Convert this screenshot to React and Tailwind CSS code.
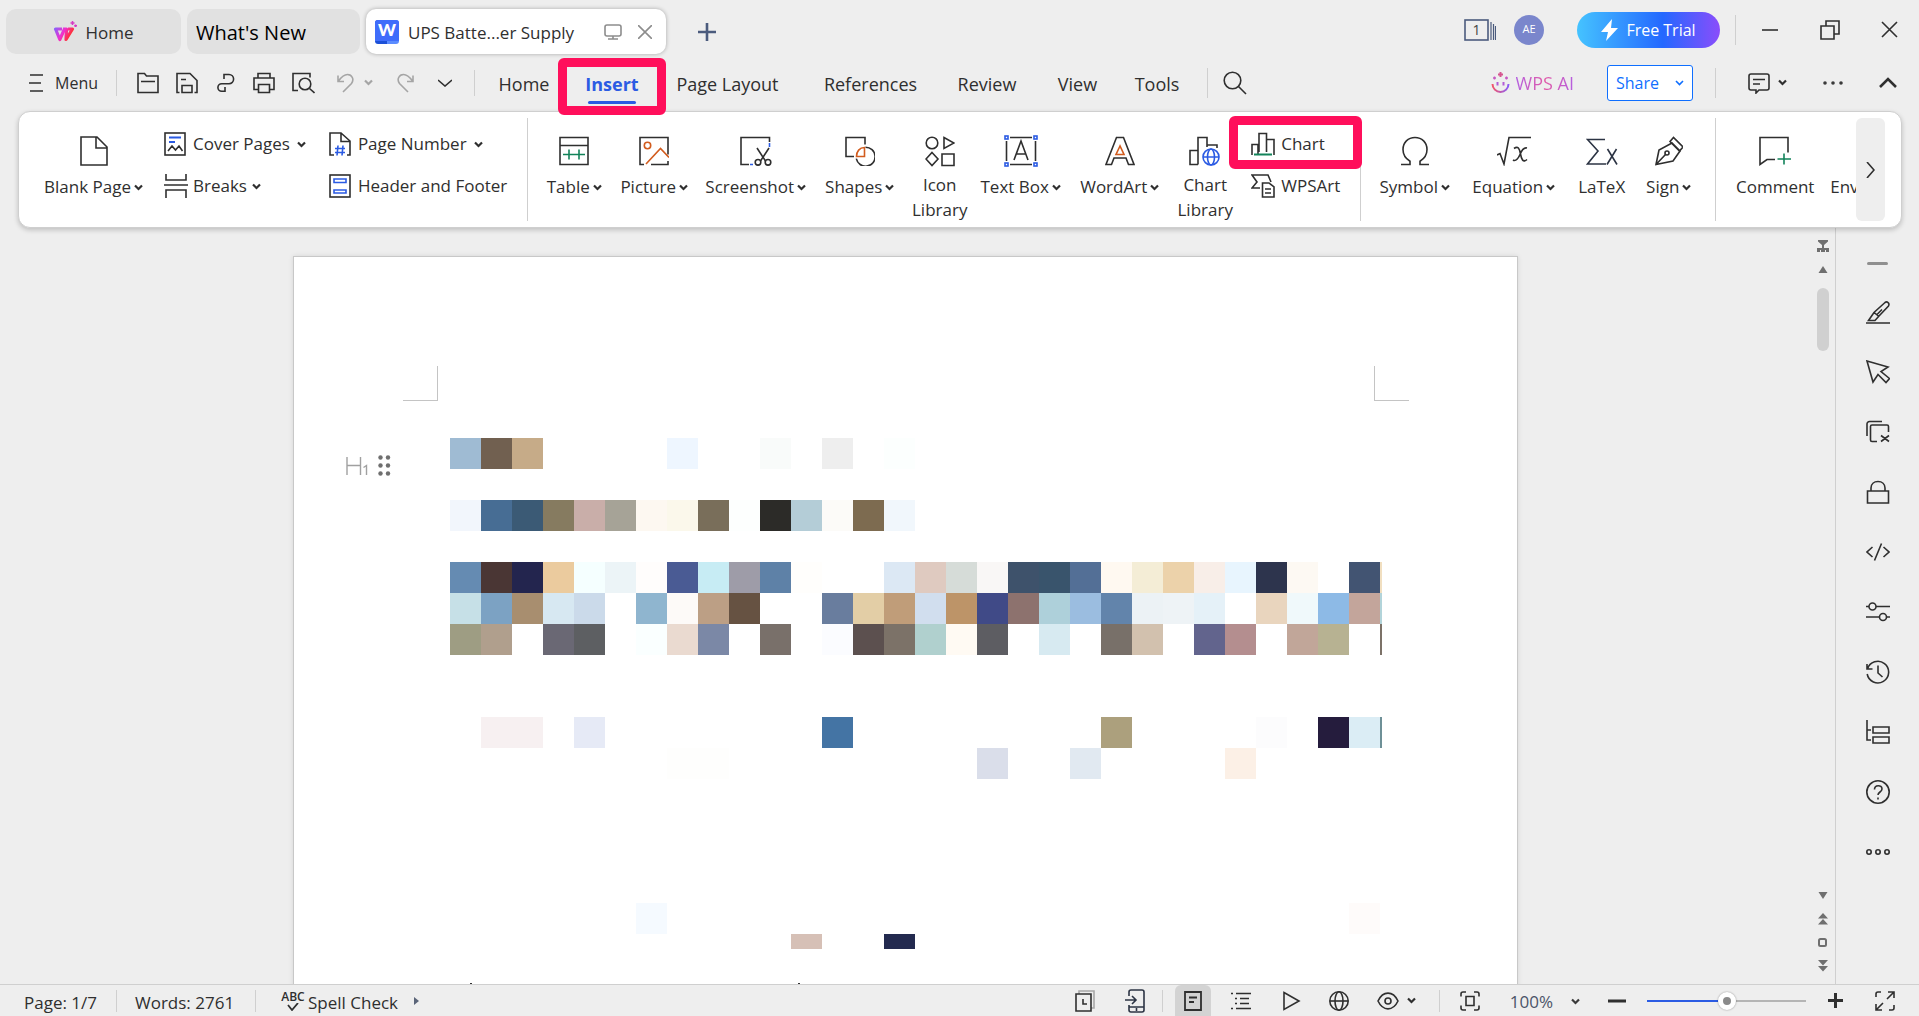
import React, { useState } from "react";
import clsx from "clsx";

// Redacted blocks of the document: [top, height, { column: colour }]
const CELL = 31;
const LAST_COLUMN = 30;
const mosaic = [
  [0, 31, { 0: "#9fbbd3", 1: "#716050", 2: "#c6ab88", 7: "#eef6ff", 10: "#f9fbfa", 12: "#eeeeee", 14: "#fcfffe" }],
  [62, 31, { 0: "#f2f6fc", 1: "#476d94", 2: "#3b5a75", 3: "#867b60", 4: "#c9aea9", 5: "#a6a397", 6: "#fdf8f1", 7: "#fbf8eb", 8: "#796e5a", 9: "#fdfffe", 10: "#2c2b28", 11: "#b4cdd7", 12: "#fcfbf8", 13: "#7d6b50", 14: "#f1f7fc" }],
  [124, 31, { 0: "#658bb2", 1: "#4a3634", 2: "#23254e", 3: "#ebcb9e", 4: "#f5ffff", 5: "#ecf4f7", 6: "#fffdfc", 7: "#4a5b94", 8: "#c7ecf4", 9: "#9e9ca8", 10: "#5e81a7", 11: "#fffefc", 14: "#dce8f4", 15: "#dfcac0", 16: "#d6dcd8", 17: "#f9f7f6", 18: "#3e526b", 19: "#39546c", 20: "#536f96", 21: "#fff9f1", 22: "#f4edd6", 23: "#ecd2aa", 24: "#f8eee8", 25: "#e8f5fe", 26: "#2d344d", 27: "#fdf9f3", 29: "#425472", 30: "#f1dfc0" }],
  [155, 31, { 0: "#c6e0e7", 1: "#7ca2c3", 2: "#a88e6f", 3: "#d7e8f2", 4: "#cbdaea", 6: "#8fb5cf", 7: "#fdfaf8", 8: "#bc9f85", 9: "#665242", 12: "#697d9e", 13: "#e3cea6", 14: "#c09d79", 15: "#d1deee", 16: "#bd9468", 17: "#404a87", 18: "#8d726e", 19: "#aed0da", 20: "#9bbde0", 21: "#6284ab", 22: "#ecf2f5", 23: "#eef3f6", 24: "#e5f1f8", 26: "#e9d5be", 27: "#f0f9fb", 28: "#8dbae6", 29: "#c3a59b", 30: "#b2d4da" }],
  [186, 31, { 0: "#9e9d83", 1: "#b09f8d", 3: "#6a6874", 4: "#5d5f62", 6: "#faffff", 7: "#eadad0", 8: "#7b88a6", 10: "#79706a", 12: "#fbfcff", 13: "#5c504f", 14: "#7c7268", 15: "#b0d0ce", 16: "#fffaf3", 17: "#5d5d62", 19: "#d7eaf1", 21: "#787069", 22: "#d2c1ae", 24: "#62648d", 25: "#b48e8f", 27: "#c1a699", 28: "#b7b292", 30: "#7c7268" }],
  [279, 31, { 1: "#f7f0f1", 2: "#f7f0f1", 4: "#e6eaf6", 12: "#4474a4", 21: "#aca07d", 26: "#fcfcfd", 28: "#251c3d", 29: "#dbedf5", 30: "#6e9097" }],
  [310, 31, { 7: "#fefefd", 8: "#fefefd", 17: "#dadeea", 20: "#e1e9f1", 25: "#fcf0e6" }],
  [465, 31, { 6: "#f5faff", 29: "#fefbfa" }],
  [496, 15, { 11: "#d6c0b6", 14: "#232a4f" }],
];

function Svg({ w, h, sw = 1.6, className, children }) {
  return (
    <svg
      width={w}
      height={h}
      viewBox={`0 0 ${w} ${h}`}
      fill="none"
      stroke="currentColor"
      strokeWidth={sw}
      className={clsx("shrink-0", className)}
      aria-hidden="true"
    >
      {children}
    </svg>
  );
}

const Caret = ({ className }) => (
  <Svg w={9} h={7} sw={2.2} className={className}>
    <path d="M1 1.500l3.500 3.500L8 1.500" />
  </Svg>
);

const Divider = ({ className }) => (
  <span className={clsx("w-px shrink-0 bg-[#cfcfcf]", className)} />
);

// Outline that draws attention to a control
const Highlight = ({ className }) => (
  <span
    className={clsx(
      "pointer-events-none absolute z-10 rounded-md border-[9px] border-[#ff0f5b]",
      className
    )}
  />
);

/* ---------- ribbon icons ---------- */

const icons = {
  blank: (
    <Svg w={28} h={32}>
      <path d="M1 2h16l10 10v18H1zM16 2v11h11" />
    </Svg>
  ),
  cover: (
    <Svg w={22} h={24}>
      <rect x="1" y="1" width="20" height="22" />
      <path d="M5 5.500h12M5 10h6" stroke="#2b5be3" strokeWidth="2" />
      <path d="M4 19l4-5 3.500 4 3.500-4 3.500 5" />
    </Svg>
  ),
  breaks: (
    <Svg w={24} h={24}>
      <path d="M2 0v6h20V0M0 11h24M2 24v-8h20v8" />
    </Svg>
  ),
  pageNumber: (
    <Svg w={22} h={24}>
      <path d="M5 23H1V1h11l9 8v14h-3M12 1v8.500h9" />
      <path d="M9 13.500l-1 10M14 13.500l-1 10M6 16.500h10M6 20.500h10" stroke="#2b5be3" />
    </Svg>
  ),
  headerFooter: (
    <Svg w={22} h={24}>
      <rect x="1" y="1" width="20" height="22" />
      <path d="M5 5h12v3.500H5zM5 16h12v3H5z" stroke="#2b5be3" />
    </Svg>
  ),
  table: (
    <Svg w={30} h={30}>
      <path d="M1 1.500h28v27H1zM1 9.500h28" />
      <path d="M4 18.500h22M10 13.500v10M20 13.500v10" stroke="#12835a" />
    </Svg>
  ),
  picture: (
    <Svg w={30} h={30}>
      <path d="M5 28.500H1v-27h28v17M29 25v3.500H12" />
      <circle cx="8.500" cy="9.500" r="3.200" stroke="#d25c1e" />
      <path d="M7 28L21.500 12.500 30 21.500" stroke="#d25c1e" />
    </Svg>
  ),
  screenshot: (
    <Svg w={32} h={30}>
      <path d="M9 28.500H1v-27h28.500V6" />
      <path d="M29.500 7v4M10 28.500h3" stroke="#2b5be3" />
      <path d="M17 12l8.500 13M29 12l-8.500 13" />
      <circle cx="18" cy="26.300" r="2.800" />
      <circle cx="28" cy="26.300" r="2.800" />
    </Svg>
  ),
  shapes: (
    <Svg w={30} h={30}>
      <path d="M9 20.500H1v-19h19v7" />
      <path d="M20.500 11.200a9.500 9.500 0 1 1-9.200 11.500" />
      <path d="M19.500 11.500v9h-8c0-5 3-9 8-9z" stroke="#d25c1e" />
    </Svg>
  ),
  iconLibrary: (
    <Svg w={30} h={32}>
      <circle cx="7" cy="8" r="5.800" />
      <path d="M19 2.500L29 8l-10 5.500zM7 17.500l6 6.500-6 6.500L1 24zM17 19h12v11.500H17z" />
    </Svg>
  ),
  textBox: (
    <Svg w={34} h={32}>
      <path d="M6 2.500h22M6 29.500h22M2.500 6v20M31.500 6v20" />
      <path d="M10 25l7-19 7 19M12.500 19h9" />
      <g stroke="#2b5be3" fill="#fff">
        <rect x="1" y="1" width="3" height="3" />
        <rect x="30" y="1" width="3" height="3" />
        <rect x="1" y="28" width="3" height="3" />
        <rect x="30" y="28" width="3" height="3" />
      </g>
    </Svg>
  ),
  wordArt: (
    <Svg w={30} h={30}>
      <path d="M11.500 1.500h7L29 28.500h-5.500L21 22H9l-2.500 6.500H1z" />
      <path d="M15 10l-4 8.500h8z" stroke="#d25c1e" />
    </Svg>
  ),
  chartLibrary: (
    <Svg w={32} h={30}>
      <path d="M9 28.500H1V14.500h8v14V1.500h9V11M18 9h10v3" />
      <g stroke="#2b5be3">
        <circle cx="22" cy="21" r="8" />
        <ellipse cx="22" cy="21" rx="3.500" ry="8" />
        <path d="M14 21h16" />
      </g>
    </Svg>
  ),
  chart: (
    <Svg w={24} h={24}>
      <path d="M1 23V12.500h6V23M8 20V1.500h7.500V20M16 7.500h7V23" />
      <path d="M3 22.500h18" stroke="#12835a" strokeWidth="2" />
    </Svg>
  ),
  wpsArt: (
    <Svg w={24} h={24}>
      <path d="M20 8L17 1H1l5 7-5 6h8" />
      <path d="M11.500 9H18l5 4v10H11.500zM14 15h6M14 19h6" />
    </Svg>
  ),
  symbol: (
    <Svg w={30} h={30}>
      <path d="M1 28.500h9v-3.300C5.500 22.500 3 18.500 3 13.500 3 6.500 8 1.500 15 1.500s12 5 12 12c0 5-2.500 9-7 11.700v3.300h9" />
    </Svg>
  ),
  equation: (
    <Svg w={34} h={30}>
      <path d="M0 19l3-1.500 4 10.500 5-26.500h22" />
      <path d="M17 12.500c4-3 5.500 0 6.500 5.500s2.500 9 6.500 5.500M30 12c-4-1-6 4-7 6.500S19 26 16 24" />
    </Svg>
  ),
  latex: (
    <Svg w={32} h={30} className="text-[#2c3444]">
      <path d="M19 3.500H1.500L12 15 1.500 28H20M21.500 13L31 28.500M30.500 13L21 28.500" />
    </Svg>
  ),
  sign: (
    <Svg w={28} h={30}>
      <path d="M1 28.500L4 14l13-7 8 8-7 10zM1 28.500l9.500-10" />
      <path d="M15 5.500l3.500-4L28 11l-3.500 4z" />
      <circle cx="12" cy="17" r="2" />
    </Svg>
  ),
  comment: (
    <Svg w={32} h={30}>
      <path d="M16 23.500H8L1 28.500V1.500h28v15" />
      <path d="M25 17.500v11M18.500 23H32" stroke="#12835a" />
    </Svg>
  ),
};

function Tool({ icon, label, lines, caret, className }) {
  return (
    <button
      className={clsx("flex shrink-0 flex-col items-center pt-[23px] whitespace-nowrap", className)}
    >
      <span className="flex h-8 items-center">{icons[icon]}</span>
      {lines ? (
        <span className="mt-[5px] leading-[25px]">
          {lines[0]}
          <br />
          {lines[1]}
        </span>
      ) : (
        <span className="mt-2 flex items-center gap-[3px] leading-6">
          {label}
          {caret && <Caret />}
        </span>
      )}
    </button>
  );
}

function SmallTool({ icon, label, caret, gap = "gap-[7px]", children }) {
  return (
    <button className={clsx("relative flex h-6 items-center whitespace-nowrap", gap)}>
      {icons[icon]}
      {label}
      {caret && <Caret />}
      {children}
    </button>
  );
}

function TitleBar() {
  return (
    <header className="flex h-[54px] shrink-0 items-stretch pl-1.5 pt-[9px]">
      <div className="flex gap-1.5">
        <button className="flex w-[175px] items-center justify-center gap-2 rounded-[10px] bg-[#e1e1e1] pt-0.5">
          <svg width="24" height="24" viewBox="0 0 24 24" fill="none" aria-hidden="true">
            <defs>
              <linearGradient id="wps" gradientUnits="userSpaceOnUse" x1="1" y1="6" x2="21" y2="18">
                <stop offset="0" stopColor="#7a68ff" />
                <stop offset="0.45" stopColor="#f02fd0" />
                <stop offset="0.8" stopColor="#ff3030" />
              </linearGradient>
            </defs>
            <path d="M9 8H2.500L6.800 18.500 11.500 8" stroke="url(#wps)" strokeWidth="3.200" strokeLinejoin="round" />
            <path d="M10 8h3.500l-.5 10.500L19.500 8H15" stroke="url(#wps)" strokeWidth="3.200" strokeLinejoin="round" />
            <path d="M19.500 0v4M17.500 2h4M22.500 3.500V6M21.200 4.800H24" stroke="#d63ac4" strokeWidth="1.500" />
          </svg>
          <span className="text-[17px]">Home</span>
        </button>
        <button className="w-[173px] rounded-[10px] bg-[#e1e1e1] pl-[9px] pt-0.5 text-left text-xl text-black">
          What's New
        </button>
        <div className="flex w-[300px] items-center rounded-[10px] bg-white pl-[9px] pr-3.5 shadow-[0_0_4px_rgba(0,0,0,0.3)]">
          <span className="flex h-6 w-6 items-center justify-center rounded-[3px] bg-[linear-gradient(90deg,#1c50d8_50%,#5b8cff_50%)]">
            <span className="mb-[3px] flex h-[21px] w-6 items-center justify-center rounded-t-[3px] bg-[#3f6dfb] font-[Lato] text-[17px] font-black text-white">
              W
            </span>
          </span>
          <span className="ml-[9px] whitespace-nowrap pt-0.5 text-[17px]">UPS Batte...er Supply</span>
          <button aria-label="Present" className="ml-auto text-[#8d8d8d]">
            <Svg w={18} h={16}>
              <path d="M3 1h12a2 2 0 0 1 2 2v7a2 2 0 0 1-2 2H3a2 2 0 0 1-2-2V3a2 2 0 0 1 2-2zM9 12v3M4 15h10" />
            </Svg>
          </button>
          <button aria-label="Close tab" className="ml-4 text-[#8d8d8d]">
            <Svg w={14} h={14}>
              <path d="M0 0l14 14M14 0L0 14" />
            </Svg>
          </button>
        </div>
      </div>
      <button aria-label="New tab" className="ml-8 text-[#4b5b7d]">
        <Svg w={18} h={18} sw={2.6}>
          <path d="M9 0v18M0 9h18" />
        </Svg>
      </button>

      <div className="-mt-1 ml-auto flex items-center pr-[21px]">
        <button aria-label="Windows" className="text-[#4b5b7d]">
          <Svg w={32} h={22}>
            <rect x="1" y="1" width="23" height="20" />
            <path d="M27 3v18M29.500 5v16M31.500 7v14" strokeWidth="1.200" />
            <text x="12.500" y="16" textAnchor="middle" fill="#444" stroke="none" fontSize="14">
              1
            </text>
          </Svg>
        </button>
        <span className="ml-[18px] flex h-[30px] w-[30px] items-center justify-center rounded-full bg-[#7a86cc] text-[11px] text-white">
          AE
        </span>
        <button className="ml-[33px] flex h-9 w-[143px] items-center justify-center gap-2 rounded-full bg-[linear-gradient(90deg,#45c3ff,#2468ff_60%,#8a4dfb)] text-base text-white">
          <svg width="17" height="22" viewBox="0 0 17 22" fill="#fff" aria-hidden="true">
            <path d="M11 0L0 13h7L5 22 17 9h-7z" />
          </svg>
          Free Trial
        </button>
        <Divider className="ml-[15px] h-[30px]" />
        <button aria-label="Minimize" className="ml-[26px]">
          <Svg w={16} h={16}>
            <path d="M0 8h16" />
          </Svg>
        </button>
        <button aria-label="Restore" className="ml-[42px]">
          <Svg w={20} h={20}>
            <path d="M1 6h13v13H1zM6 6V1h13v13h-5" />
          </Svg>
        </button>
        <button aria-label="Close" className="ml-[41px]">
          <Svg w={17} h={17}>
            <path d="M1 1l15 15M16 1L1 16" />
          </Svg>
        </button>
      </div>
    </header>
  );
}

function MenuBar() {
  const [active, setActive] = useState("Insert");
  const tabs = [
    { name: "Home", style: "w-[52px]" },
    { name: "Insert", style: "ml-[34px] w-[56px]" },
    { name: "Page Layout", style: "ml-[35px] w-[105px]" },
    { name: "References", style: "ml-11 w-[93px]" },
    { name: "Review", style: "ml-10 w-[60px]" },
    { name: "View", style: "ml-10 w-[41px]" },
    { name: "Tools", style: "ml-9 w-[46px]" },
  ];

  return (
    <div className="flex h-[57px] shrink-0 items-center pl-[29px] pr-[22px]">
      <button className="flex items-center gap-3 text-base">
        <Svg w={14} h={18}>
          <path d="M1 1h13M0 9h12M1 17h13" />
        </Svg>
        Menu
      </button>
      <Divider className="ml-[18px] h-[26px]" />
      <button aria-label="Open" className="ml-5">
        <Svg w={22} h={22}>
          <path d="M1 20.500V1.500h6.500l2 2.500H21v16.500zM4 9.500h14" />
        </Svg>
      </button>
      <button aria-label="Save" className="ml-[17px]">
        <Svg w={22} h={22}>
          <path d="M3.500 20.500H1V1.500h13l7 7v12h-2.500M6 20.500v-7h10v7zM5 7.500h5" />
        </Svg>
      </button>
      <button aria-label="Export" className="ml-[19px]">
        <Svg w={18} h={20}>
          <path d="M7 6V1.500h5a4.600 4.600 0 0 1 0 9.200H4.700a3.800 3.800 0 0 0 0 7.600H8V14" />
        </Svg>
      </button>
      <button aria-label="Print" className="ml-[18px]">
        <Svg w={22} h={22}>
          <path d="M5 6V1.500h12V6M5 17.500H1V6h20v11.500h-4M5.500 12.500h11v8h-11z" />
        </Svg>
      </button>
      <button aria-label="Print preview" className="ml-[17px]">
        <Svg w={23} h={22}>
          <path d="M6 18.500H1v-17h17v4" />
          <circle cx="13" cy="12" r="5.800" />
          <path d="M17.500 16.500L22.500 21" />
        </Svg>
      </button>
      <button aria-label="Undo" className="ml-[22px] text-[#a5a5a5]">
        <Svg w={17} h={20}>
          <path d="M1 2.500v6h6M1.500 8C4 4.500 7 1.500 10.500 1.500c4.500 0 7 5 4 9L6 19" />
        </Svg>
      </button>
      <button aria-label="Undo list" className="ml-2.5 text-[#a5a5a5]">
        <Caret />
      </button>
      <button aria-label="Redo" className="ml-6 text-[#a5a5a5]">
        <Svg w={17} h={20}>
          <path d="M16 2.500v6h-6M15.500 8C13 4.500 10 1.500 6.500 1.500c-4.500 0-7 5-4 9L11 19" />
        </Svg>
      </button>
      <button aria-label="Customize" className="ml-6">
        <Svg w={14} h={8}>
          <path d="M0 1l7 6 7-6" />
        </Svg>
      </button>
      <Divider className="ml-[22px] h-[26px]" />

      <nav className="ml-[23px] flex items-center text-lg">
        {tabs.map((tab) => (
          <button
            key={tab.name}
            onClick={() => setActive(tab.name)}
            className={clsx(
              "relative flex h-[42px] items-center justify-center whitespace-nowrap pt-0.5",
              tab.style,
              active === tab.name && "font-bold text-[#2b5be3]"
            )}
          >
            {tab.name}
            {active === tab.name && (
              <span className="absolute bottom-0 h-[3px] w-12 rounded-full bg-[#2b5be3]" />
            )}
            {tab.name === "Insert" && <Highlight className="-inset-x-[26px] -bottom-[11px] -top-1" />}
          </button>
        ))}
      </nav>
      <Divider className="ml-[27px] h-[30px]" />
      <button aria-label="Search" className="ml-[15px]">
        <Svg w={24} h={24}>
          <circle cx="9.500" cy="9.500" r="8.300" />
          <path d="M15.500 15.500L23 23" />
        </Svg>
      </button>

      <div className="ml-auto flex items-center">
        <button className="flex items-center gap-1.5 text-lg">
          <svg width="19" height="22" viewBox="0 0 19 22" fill="none" strokeWidth="2" aria-hidden="true">
            <defs>
              <linearGradient id="ai" x1="0" x2="1">
                <stop offset="0" stopColor="#f2556b" />
                <stop offset="1" stopColor="#8b5cf6" />
              </linearGradient>
            </defs>
            <path d="M1.500 12a8 8 0 0 0 16 0" stroke="url(#ai)" />
            <path d="M6.500 10v3.500M12.500 10v3.500" stroke="#b35cd6" />
            <path d="M9.500 0v5M7 2.500h5" stroke="#d6558f" />
            <path d="M3.500 4.500v3M2 6h3M15.500 4.500v3M14 6h3" stroke="#c65ac4" strokeWidth="1.400" />
          </svg>
          <span className="bg-[linear-gradient(90deg,#b45fe0,#e05aa8,#b45fe0)] bg-clip-text text-transparent">
            WPS AI
          </span>
        </button>
        <button className="ml-[33px] flex h-9 w-[86px] items-center justify-between rounded-[3px] border border-[#0f6fff] bg-white px-2 text-base text-[#0f6fff]">
          Share
          <Svg w={9} h={6}>
            <path d="M1 1l3.500 3.500L8 1" />
          </Svg>
        </button>
        <Divider className="ml-[22px] h-[30px]" />
        <button aria-label="Comments" className="ml-8 flex items-center gap-2">
          <Svg w={22} h={22}>
            <path d="M3 2h16a2 2 0 0 1 2 2v12a2 2 0 0 1-2 2h-8l-3 3v-3H3a2 2 0 0 1-2-2V4a2 2 0 0 1 2-2zM5 7.500h12M5 12h7" />
          </Svg>
          <Caret />
        </button>
        <button aria-label="More" className="ml-9">
          <svg width="20" height="4" viewBox="0 0 20 4" fill="#3a3a3a" aria-hidden="true">
            <circle cx="2" cy="2" r="1.800" />
            <circle cx="10" cy="2" r="1.800" />
            <circle cx="18" cy="2" r="1.800" />
          </svg>
        </button>
        <button aria-label="Collapse ribbon" className="ml-9">
          <Svg w={18} h={11} sw={2.6}>
            <path d="M1 10l8-8 8 8" />
          </Svg>
        </button>
      </div>
    </div>
  );
}

function Ribbon() {
  return (
    <div className="relative z-0 ml-[18px] mr-[17px] flex h-[117px] shrink-0 overflow-hidden rounded-xl border border-[#cfcfcf] bg-white text-[17px] shadow-[0_2px_5px_rgba(0,0,0,0.2)]">
      <div className="flex min-w-0 flex-1 overflow-hidden">
        <Tool icon="blank" label="Blank Page" caret className="ml-4 w-[117px]" />
        <div className="ml-3 flex flex-col items-start gap-[18px] pt-5">
          <SmallTool icon="cover" label="Cover Pages" caret />
          <SmallTool icon="breaks" label="Breaks" caret gap="gap-[5px]" />
        </div>
        <div className="ml-[23px] flex flex-col items-start gap-[18px] pt-5">
          <SmallTool icon="pageNumber" label="Page Number" caret />
          <SmallTool icon="headerFooter" label="Header and Footer" />
        </div>
        <Divider className="my-1.5 ml-5" />
        <Tool icon="table" label="Table" caret className="ml-1.5 w-20" />
        <Tool icon="picture" label="Picture" caret className="w-20" />
        <Tool icon="screenshot" label="Screenshot" caret className="w-[123px]" />
        <Tool icon="shapes" label="Shapes" caret className="w-[85px]" />
        <Tool icon="iconLibrary" lines={["Icon", "Library"]} className="w-[75px]" />
        <Tool icon="textBox" label="Text Box" caret className="w-[87px]" />
        <Tool icon="wordArt" label="WordArt" caret className="w-[111px]" />
        <Tool icon="chartLibrary" lines={["Chart", "Library"]} className="w-[60px]" />
        <div className="ml-4 flex w-[100px] flex-col items-start gap-[18px] pt-5">
          <SmallTool icon="chart" label="Chart" gap="gap-1.5">
            <Highlight className="-bottom-[13px] -left-[22px] -right-[37px] -top-4" />
          </SmallTool>
          <SmallTool icon="wpsArt" label="WPSArt" gap="gap-1.5" />
        </div>
        <Divider className="my-1.5 ml-5" />
        <Tool icon="symbol" label="Symbol" caret className="ml-[7px] w-[93px]" />
        <Tool icon="equation" label="Equation" caret className="w-[105px]" />
        <Tool icon="latex" label="LaTeX" className="w-[71px]" />
        <Tool icon="sign" label="Sign" caret className="w-[63px]" />
        <Divider className="my-1.5 ml-[15px]" />
        <Tool icon="comment" label="Comment" className="ml-2.5 w-[98px]" />
        <button className="ml-1.5 flex flex-col pt-[63px] leading-6">Envelopes</button>
      </div>
      <button
        aria-label="Scroll ribbon"
        className="my-1.5 mr-4 flex w-[29px] shrink-0 items-center justify-center rounded-md bg-[#eeeeee]"
      >
        <Svg w={9} h={16}>
          <path d="M1 0l7 8-7 8" />
        </Svg>
      </button>
    </div>
  );
}

function DocumentPage() {
  return (
    <article className="mx-auto mt-[28px] h-[1600px] w-[1225px] max-w-full border border-[#c8c8c8] bg-white pt-[109px] shadow-[0_0_5px_rgba(0,0,0,0.1)]">
      <div className="flex justify-between pl-[109px] pr-[108px]">
        <span className="h-[35px] w-[35px] border-b border-r border-[#c4c4c4]" />
        <span className="h-[35px] w-[35px] border-b border-l border-[#c4c4c4]" />
      </div>
      <div className="mt-[37px] flex pl-[52px]">
        <div className="flex w-[104px] items-start gap-[9px] pt-[17px] text-[#a0a0a0]">
          <Svg w={23} h={22} sw={1.4}>
            <path d="M1 2v18M14.500 2v18M1 10.500h13.500M17.500 12.500l3-2V20" />
          </Svg>
          <svg width="13" height="22" viewBox="0 0 13 22" fill="#6f6f6f" aria-hidden="true">
            {[2.5, 10.5, 18.5].map((y) => (
              <g key={y}>
                <circle cx="2.500" cy={y} r="2.200" />
                <circle cx="10" cy={y} r="2.200" />
              </g>
            ))}
          </svg>
        </div>
        <svg width="932" height="550" viewBox="0 0 932 550" shapeRendering="crispEdges" aria-hidden="true">
          {mosaic.map(([top, height, cells]) =>
            Object.entries(cells).map(([col, fill]) => (
              <rect
                key={`${top}-${col}`}
                x={Number(col) * CELL}
                y={top}
                width={Number(col) === LAST_COLUMN ? 2 : CELL}
                height={height}
                fill={fill}
              />
            ))
          )}
          <path d="M20 545h2v3h-2zM348 545h2v3h-2z" fill="#333" />
        </svg>
      </div>
    </article>
  );
}

function ScrollBar() {
  return (
    <div className="flex w-[25px] shrink-0 flex-col items-center text-[#6f6f6f]">
      <svg width="12" height="12" viewBox="0 0 12 12" className="mt-3" fill="currentColor" aria-hidden="true">
        <path d="M1 0h10v1.500L7 5H5L1 1.500zM5 5h2v3H5zM0 8h12v4H9v-2H8v2H4v-2H3v2H0z" />
      </svg>
      <svg width="10" height="7" viewBox="0 0 10 7" className="mt-[14px]" fill="currentColor" aria-hidden="true">
        <path d="M5 0l4.500 7h-9z" />
      </svg>
      <span className="mt-[15px] h-[63px] w-3 rounded-md bg-[#d0d0d0]" />
      <svg width="10" height="7" viewBox="0 0 10 7" className="mt-auto" fill="currentColor" aria-hidden="true">
        <path d="M.5 0h9L5 7z" />
      </svg>
      <svg width="10" height="12" viewBox="0 0 10 12" className="mt-3.5" fill="currentColor" aria-hidden="true">
        <path d="M5 0l5 5.500H0zM5 6l5 5.500H0z" />
      </svg>
      <Svg w={9} h={9} sw={2} className="mt-[13px]">
        <rect x="1" y="1" width="7" height="7" rx="1.500" />
      </Svg>
      <svg width="10" height="12" viewBox="0 0 10 12" className="mb-3 mt-[13px]" fill="currentColor" aria-hidden="true">
        <path d="M0 0h10L5 5.500zM0 6h10l-5 5.500z" />
      </svg>
    </div>
  );
}

const sideTools = [
  ["Styles", <path d="M0 23h24M2.500 20.500l5.500-8L19 2.500c2-1.500 5 .5 3.500 3.500L13 16l-4 4.500H2.500zM8 12.500l5 4M11 14.500l5-5" />],
  ["Select", <path d="M1 1l21 6-7 4.500 8.500 7-3.500 4-8-8L7 22z" />],
  ["Clipboard", <path d="M1 16V4a2.500 2.500 0 0 1 2.500-2.500H16M11 21.500H6a1.500 1.500 0 0 1-1.500-1.500V6.500A1.500 1.500 0 0 1 6 5h15a1.500 1.500 0 0 1 1.500 1.500V12M15 15.500l8 6M23 15.500l-8 6" />],
  ["Restrict", <path d="M1.500 11h21v12h-21zM5 11V8c0-4 3-6.500 7-6.500S19 4 19 8v3" />],
  ["Code", <path d="M6.500 7L1 12l5.500 5M17.500 7l5.500 5-5.500 5M15.500 3.500l-7 17" />],
  ["Settings", (
    <>
      <circle cx="6.500" cy="6.500" r="3.500" />
      <circle cx="17" cy="17" r="3.500" />
      <path d="M0 6.500h3M10 6.500h14M0 17h13.500M20.500 17H24" />
    </>
  )],
  ["History", <path d="M1 4v5h5.500M1.500 9A10.800 10.800 0 1 1 1.200 14M12 5.500v7.500l4.500 4" />],
  ["Outline", <path d="M1 0v20h4M1 10h4M7 7h16v6H7zM7 17h16v6H7z" />],
  ["Help", (
    <>
      <circle cx="12" cy="12" r="11.200" />
      <path d="M8.500 9.500c0-5 7.500-5 7.500-.5 0 3-4 3-4 6M12 17.500v2" />
    </>
  )],
  ["More", (
    <>
      <circle cx="3" cy="12" r="2.200" />
      <circle cx="12" cy="12" r="2.200" />
      <circle cx="21" cy="12" r="2.200" />
    </>
  )],
];

function SidePanel() {
  return (
    <aside className="flex w-[84px] shrink-0 flex-col items-center gap-9 border-l border-[#cfcfcf] pt-[34px]">
      <span className="-mb-px h-[3px] w-[21px] shrink-0 rounded-full bg-[#8f8f8f]" />
      {sideTools.map(([name, drawing]) => (
        <button key={name} aria-label={name}>
          <Svg w={24} h={24}>{drawing}</Svg>
        </button>
      ))}
    </aside>
  );
}

function StatusBar() {
  const [zoom, setZoom] = useState(50);

  return (
    <footer className="flex h-8 shrink-0 items-center whitespace-nowrap border-t border-[#cfcfcf] pl-6 pr-6 text-[17px]">
      <span className="w-[92px] pt-1">Page: 1/7</span>
      <Divider className="h-[22px]" />
      <span className="ml-[18px] w-[120px] pt-1">Words: 2761</span>
      <Divider className="h-[22px]" />
      <button className="ml-6 flex items-center">
        <span className="flex w-[26px] flex-col items-center text-xs font-semibold leading-3">
          ABC
          <Svg w={12} h={8} sw={1.8}>
            <path d="M1 2l4 5 6-7" />
          </Svg>
        </span>
        <span className="ml-0.5 pt-1">Spell Check</span>
        <svg width="5" height="8" viewBox="0 0 5 8" className="ml-4" fill="#5a6478" aria-hidden="true">
          <path d="M0 0l5 4-5 4z" />
        </svg>
      </button>

      <div className="ml-auto flex items-center self-stretch">
        <button aria-label="Recent">
          <Svg w={20} h={22}>
            <path d="M4 4V1h15v17h-3" stroke="#a8a8a8" />
            <path d="M1 4h15v17H1zM8 9v5h4" />
          </Svg>
        </button>
        <button aria-label="Send to phone" className="ml-[30px] text-[#2c3444]">
          <Svg w={20} h={24}>
            <path d="M4 7V3a2 2 0 0 1 2-2h11a2 2 0 0 1 2 2v18a2 2 0 0 1-2 2H6a2 2 0 0 1-2-2v-5M0 11h10M7 7l4 4-4 4M4 18h15M11.500 19v3" />
          </Svg>
        </button>
        <Divider className="ml-[17px] h-[22px]" />
        <button
          aria-label="Page view"
          className="ml-3 flex w-9 items-center justify-center self-stretch rounded-t-md bg-[#d3d3d3]"
        >
          <Svg w={18} h={20} sw={1.8}>
            <path d="M1 1h16v18H1zM5 6.500h8M5 11h5" />
          </Svg>
        </button>
        <button aria-label="Outline view" className="ml-5">
          <Svg w={20} h={18}>
            <path d="M0 1.500h2M5 1.500h15M4 6.500h2M9 6.500h9M4 11.500h2M9 11.500h9M0 16.500h2M5 16.500h15" />
          </Svg>
        </button>
        <button aria-label="Read mode" className="ml-8">
          <Svg w={18} h={20}>
            <path d="M1 1.500l15 8.500-15 8.500z" />
          </Svg>
        </button>
        <button aria-label="Web view" className="ml-7">
          <Svg w={20} h={20}>
            <circle cx="10" cy="10" r="9.200" />
            <ellipse cx="10" cy="10" rx="4" ry="9.200" />
            <path d="M1 10h18" />
          </Svg>
        </button>
        <button aria-label="Eye protection" className="ml-7 flex items-center gap-2">
          <Svg w={22} h={18}>
            <path d="M1 9c5-10.500 15-10.500 20 0-5 10.500-15 10.500-20 0z" />
            <circle cx="11" cy="9" r="3" />
          </Svg>
          <Caret />
        </button>
        <Divider className="ml-[23px] h-[22px]" />
        <button aria-label="Fit page" className="ml-5">
          <Svg w={20} h={20}>
            <path d="M1 5.500V3a2 2 0 0 1 2-2h3M14 1h3a2 2 0 0 1 2 2v2.500M19 14.500V17a2 2 0 0 1-2 2h-3M6 19H3a2 2 0 0 1-2-2v-2.500M6 5.500h8v9H6z" />
          </Svg>
        </button>
        <button className="ml-[30px] flex items-center gap-[18px] pt-0.5 text-[#4b5468]">
          100%
          <Caret className="text-[#3a3a3a]" />
        </button>
        <button aria-label="Zoom out" className="ml-7">
          <Svg w={18} h={18} sw={3}>
            <path d="M0 9h18" />
          </Svg>
        </button>
        <input
          type="range"
          aria-label="Zoom"
          value={zoom}
          onChange={(e) => setZoom(Number(e.target.value))}
          className="ml-[21px] h-0.5 w-[159px] appearance-none bg-[linear-gradient(90deg,#2b5be3_50%,#b5b5b5_50%)] [&::-webkit-slider-thumb]:h-[18px] [&::-webkit-slider-thumb]:w-[18px] [&::-webkit-slider-thumb]:appearance-none [&::-webkit-slider-thumb]:rounded-full [&::-webkit-slider-thumb]:border-[5px] [&::-webkit-slider-thumb]:border-white [&::-webkit-slider-thumb]:bg-[#8a8a8a] [&::-webkit-slider-thumb]:shadow-[0_0_2px_rgba(0,0,0,0.4)]"
        />
        <button aria-label="Zoom in" className="ml-[22px]">
          <Svg w={15} h={15} sw={3}>
            <path d="M0 7.500h15M7.500 0v15" />
          </Svg>
        </button>
        <button aria-label="Full screen" className="ml-8">
          <Svg w={20} h={20}>
            <path d="M1 6V3a2 2 0 0 1 2-2h3M13 1h6v6M19 1l-7 7M1 13v6h6M1 19l7-7M19 14v3a2 2 0 0 1-2 2h-3" />
          </Svg>
        </button>
      </div>
    </footer>
  );
}

function App() {
  return (
    <div className="flex h-screen flex-col overflow-hidden bg-[#eeeeee] font-['Open_Sans','Noto_Sans',sans-serif] text-[#2f2f2f]">
      <TitleBar />
      <MenuBar />
      <Ribbon />
      <main className="flex min-h-0 flex-1">
        <div className="min-w-0 flex-1 overflow-hidden">
          <DocumentPage />
        </div>
        <ScrollBar />
        <SidePanel />
      </main>
      <StatusBar />
    </div>
  );
}

export default App;
